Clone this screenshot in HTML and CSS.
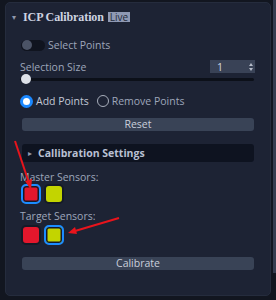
FILE: index.html
```html
<!DOCTYPE html>
<html>
<head>
<meta charset="utf-8">
<link rel="stylesheet" href="styles.css">
</head>
<body>
<div class="panel">
  <div class="header">
    <span class="caret">&#9662;</span>
    <span class="title">ICP Calibration</span>
    <span class="badge">Live</span>
  </div>
  <div class="row toggle-row">
    <span class="toggle"><span class="knob"></span></span>
    <span class="label">Select Points</span>
  </div>
  <div class="row size-row">
    <span class="label">Selection Size</span>
    <span class="spin"><span class="spin-val">1</span><span class="spin-arrows"><span class="up"></span><span class="down"></span></span></span>
  </div>
  <div class="slider"><span class="track"></span><span class="thumb"></span></div>
  <div class="row radio-row">
    <span class="radio on"></span><span class="label light">Add Points</span>
    <span class="radio off"></span><span class="label">Remove Points</span>
  </div>
  <div class="btn reset">Reset</div>
  <div class="section"><span class="caret small">&#9656;</span><span class="section-title">Callibration Settings</span></div>
  <div class="label sub master-label">Master Sensors:</div>
  <div class="swatches">
    <span class="sw red sel"></span><span class="sw yellow"></span>
  </div>
  <div class="label sub target-label">Target Sensors:</div>
  <div class="swatches">
    <span class="sw red"></span><span class="sw yellow sel"></span>
  </div>
  <div class="btn calibrate">Calibrate</div>
</div>
<div class="scrollbar"></div>
<svg class="arrows" width="276" height="300" viewBox="0 0 276 300">
  <line x1="15" y1="141" x2="29" y2="183" stroke="#e8141c" stroke-width="2"/>
  <polygon points="31,190 25,181 32,179" fill="#e8141c"/>
  <line x1="119" y1="218" x2="75" y2="231" stroke="#e8141c" stroke-width="2"/>
  <polygon points="68,233 75,227 77,234" fill="#e8141c"/>
</svg>
</body>
</html>
```
FILE: styles.css
```css
html, body {
  margin: 0;
  padding: 0;
}
body {
  width: 276px;
  height: 300px;
  background: #121620;
  display: flex;
  align-items: flex-start;
  padding-left: 5px;
  box-sizing: border-box;
  position: relative;
  overflow: hidden;
  font-family: "Open Sans", "DejaVu Sans", sans-serif;
  font-size: 10.5px;
  color: #9ea6ba;
}
.panel {
  margin-top: 2px;
  width: 266px;
  height: 294px;
  box-sizing: border-box;
  background: #1d2334;
  border: 1px solid #252c3d;
  border-radius: 5px;
  padding: 7px 16px 0 14px;
  display: flex;
  flex-direction: column;
}
.scrollbar {
  margin-left: 2px;
  width: 3px;
  height: 273px;
  background: #363d50;
}
.header {
  height: 14px;
  display: flex;
  align-items: center;
  margin-left: -8px;
}
.caret {
  color: #8f97ab;
  font-size: 8px;
  width: 8px;
  margin-right: 3px;
  font-family: "DejaVu Sans", sans-serif;
}
.title {
  font-family: "Liberation Serif", serif;
  font-weight: bold;
  font-size: 12px;
  color: #cdd3e0;
  letter-spacing: -0.1px;
}
.badge {
  margin-left: 4px;
  background: #8f99b3;
  color: #232a3a;
  font-size: 10px;
  line-height: 10px;
  padding: 0 2px;
  height: 10px;
}
.row {
  display: flex;
  align-items: center;
}
.toggle-row {
  margin-top: 15px;
  height: 12px;
}
.toggle {
  width: 24px;
  height: 11px;
  border-radius: 6px;
  background: #10141f;
  display: flex;
  align-items: center;
  padding-left: 1px;
  box-sizing: border-box;
  margin-left: 1px;
  margin-right: 3px;
}
.knob {
  width: 10px;
  height: 10px;
  border-radius: 50%;
  background: #4b5366;
}
.size-row {
  margin-top: 9px;
  height: 13px;
  justify-content: space-between;
}
.spin {
  width: 45px;
  height: 13px;
  background: #394256;
  display: flex;
  align-items: center;
  justify-content: space-between;
  box-sizing: border-box;
  padding: 0 2px 0 7px;
  margin-right: -1px;
  color: #d3d7e0;
}
.spin-arrows {
  display: flex;
  flex-direction: column;
  gap: 2px;
}
.up, .down {
  width: 0;
  height: 0;
  border-left: 2px solid transparent;
  border-right: 2px solid transparent;
}
.up { border-bottom: 3px solid #b5bbc8; }
.down { border-top: 3px solid #b5bbc8; }
.slider {
  margin-top: 1px;
  height: 10px;
  display: flex;
  align-items: center;
  position: relative;
}
.track {
  flex: 1;
  height: 3px;
  border-radius: 2px;
  background: #0c1019;
}
.thumb {
  position: absolute;
  left: 1px;
  top: 0;
  width: 10px;
  height: 10px;
  border-radius: 50%;
  background: #dde1e9;
}
.radio-row {
  margin-top: 10px;
  height: 14px;
}
.radio {
  box-sizing: border-box;
  border-radius: 50%;
  margin-right: 3px;
}
.radio.on {
  width: 13px;
  height: 13px;
  background: #fff;
  border: 3.5px solid #1b88ff;
}
.radio.off {
  width: 12px;
  height: 12px;
  border: 1px solid #a8aebb;
  margin-left: 8px;
}
.label.light { color: #c3c9d6; }
.btn {
  height: 13px;
  line-height: 13px;
  background: #394356;
  border-radius: 3px;
  text-align: center;
  color: #c9cfdb;
  margin-left: 2px;
  margin-right: 0;
}
.reset { margin-top: 10px; }
.section {
  margin-top: 13px;
  height: 18px;
  background: #0e1320;
  border-radius: 3px;
  margin-left: 2px;
  display: flex;
  align-items: center;
  padding-left: 6px;
}
.caret.small {
  font-size: 8px;
  margin-right: 2px;
}
.section-title {
  font-weight: bold;
  color: #b9c0d3;
}
.sub {
  height: 13px;
  line-height: 13px;
}
.master-label { margin-top: 9px; }
.target-label { margin-top: 6px; }
.swatches {
  display: flex;
  gap: 3px;
  height: 20px;
  margin-left: 1px;
}
.sw {
  width: 20px;
  height: 20px;
  box-sizing: border-box;
  border-radius: 5px;
  border: 2px solid #151a27;
}
.sw.sel {
  border-color: #1b8cff;
  box-shadow: inset 0 0 0 1.5px #151a27;
}
.red { background: #e3172c; }
.yellow { background: #c3d400; }
.target-label + .swatches { margin-top: 2px; }
.calibrate { margin-top: 12px; }
.arrows {
  position: absolute;
  left: 0;
  top: 0;
  pointer-events: none;
}
```
